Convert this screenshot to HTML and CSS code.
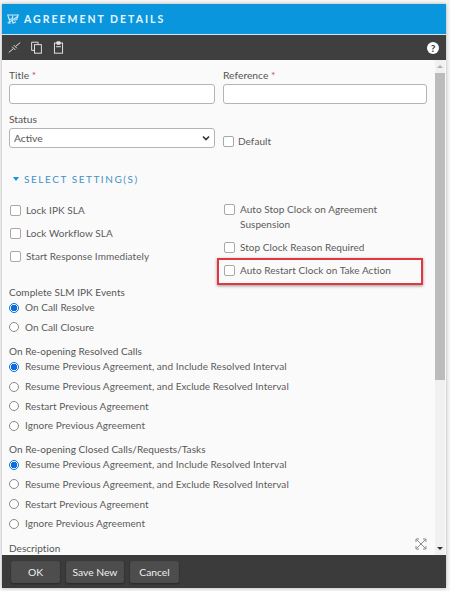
FILE: index.html
```html
<!DOCTYPE html>
<html lang="en">
<head>
    <meta charset="UTF-8">
    <title>Agreement Details</title>
    <link rel="stylesheet" href="styles.css">
</head>
<body>
    <div class="dialog">
        <div class="header">
            <svg class="header-icon" viewBox="0 0 16 16" width="12" height="13" fill="none" stroke="#cfe9f8" stroke-width="1.5">
                <path d="M1 2h7l-1 5-4 1z"/>
                <path d="M9 2h6l-2 6-4 1"/>
                <path d="M1 13 14 4"/>
                <path d="M3 9l1 5M7 9l1 4 4-2"/>
            </svg>
            <span class="header-title">AGREEMENT DETAILS</span>
        </div>
        <div class="toolbar">
            <svg viewBox="0 0 16 16" width="13" height="13" fill="none" stroke="#e4e4e4" stroke-width="1.2">
                <path d="M1 14 6.5 9.5M9.5 6.5 15 2"/>
                <path d="M5 7l4 4M7 5l4 4"/>
            </svg>
            <svg viewBox="0 0 16 16" width="13" height="13" fill="none" stroke="#e4e4e4" stroke-width="1.2">
                <path d="M10 4V1.5H2v10h3"/>
                <rect x="5.5" y="4.5" width="8.5" height="10.5"/>
            </svg>
            <svg viewBox="0 0 16 16" width="13" height="13" fill="none" stroke="#e4e4e4" stroke-width="1.2">
                <rect x="3" y="2.5" width="10" height="12.5"/>
                <path d="M6 1h4v3H6z" fill="#e4e4e4"/>
                <path d="M5 7h6"/>
            </svg>
            <span class="help">?</span>
        </div>
        <div class="main">
            <div class="content">
                <div class="form-row">
                    <div class="field">
                        <label class="label">Title <span class="req">*</span></label>
                        <input class="input" type="text">
                    </div>
                    <div class="field">
                        <label class="label">Reference <span class="req">*</span></label>
                        <input class="input" type="text">
                    </div>
                </div>
                <div class="form-row status-row">
                    <div class="field">
                        <label class="label">Status</label>
                        <select class="input select"><option>Active</option></select>
                    </div>
                    <div class="field default-field">
                        <label class="check"><input type="checkbox">Default</label>
                    </div>
                </div>

                <div class="section-title"><span class="caret"></span>SELECT SETTING(S)</div>

                <div class="settings">
                    <div class="settings-col settings-left">
                        <label class="check"><input type="checkbox">Lock IPK SLA</label>
                        <label class="check"><input type="checkbox">Lock Workflow SLA</label>
                        <label class="check"><input type="checkbox">Start Response Immediately</label>
                    </div>
                    <div class="settings-col settings-right">
                        <label class="check wrap"><input type="checkbox"><span>Auto Stop Clock on Agreement Suspension</span></label>
                        <label class="check"><input type="checkbox">Stop Clock Reason Required</label>
                        <label class="check marked"><input type="checkbox">Auto Restart Clock on Take Action<span class="highlight"></span></label>
                    </div>
                </div>

                <div class="group first">
                    <div class="group-label">Complete SLM IPK Events</div>
                    <label class="radio"><input type="radio" name="g1" checked>On Call Resolve</label>
                    <label class="radio"><input type="radio" name="g1">On Call Closure</label>
                </div>
                <div class="group">
                    <div class="group-label">On Re-opening Resolved Calls</div>
                    <label class="radio"><input type="radio" name="g2" checked>Resume Previous Agreement, and Include Resolved Interval</label>
                    <label class="radio"><input type="radio" name="g2">Resume Previous Agreement, and Exclude Resolved Interval</label>
                    <label class="radio"><input type="radio" name="g2">Restart Previous Agreement</label>
                    <label class="radio"><input type="radio" name="g2">Ignore Previous Agreement</label>
                </div>
                <div class="group">
                    <div class="group-label">On Re-opening Closed Calls/Requests/Tasks</div>
                    <label class="radio"><input type="radio" name="g3" checked>Resume Previous Agreement, and Include Resolved Interval</label>
                    <label class="radio"><input type="radio" name="g3">Resume Previous Agreement, and Exclude Resolved Interval</label>
                    <label class="radio"><input type="radio" name="g3">Restart Previous Agreement</label>
                    <label class="radio"><input type="radio" name="g3">Ignore Previous Agreement</label>
                </div>
                <div class="group description">
                    <div class="group-label">Description</div>
                    <svg class="expand" viewBox="0 0 12 12" width="12" height="12" fill="none" stroke="#8a8a8a" stroke-width="1">
                        <path d="M1 4V1h3M8 1h3v3M11 8v3H8M4 11H1V8"/>
                        <path d="M1.5 1.5l9 9M10.5 1.5l-9 9"/>
                    </svg>
                </div>
            </div>
            <div class="scrollbar">
                <span class="arrow up"></span>
                <div class="track"><div class="thumb"></div></div>
                <span class="arrow down"></span>
            </div>
        </div>
        <div class="footer">
            <button class="btn btn-ok">OK</button>
            <button class="btn btn-save">Save New</button>
            <button class="btn btn-cancel">Cancel</button>
        </div>
    </div>
</body>
</html>
```

FILE: styles.css
```css
* {
    margin: 0;
    padding: 0;
    box-sizing: border-box;
    font-family: 'Lato', 'Liberation Sans', sans-serif;
}

body {
    background-color: #f4f4f4;
    height: 591px;
    overflow: hidden;
    padding: 4px 4px 3px 2px;
}

.dialog {
    display: flex;
    flex-direction: column;
    height: 584px;
    background-color: #fafafa;
    box-shadow: 0 0 3px rgba(0, 0, 0, 0.3);
}

.header {
    display: flex;
    align-items: center;
    gap: 5px;
    height: 31px;
    padding-left: 5px;
    flex: none;
    background-color: #0a96dc;
    border-bottom: 1px solid #cfe6f3;
}

.header-title {
    color: #e8f5fc;
    font-size: 10.5px;
    font-weight: 700;
    letter-spacing: 2px;
}

.toolbar {
    display: flex;
    align-items: center;
    gap: 9px;
    height: 25px;
    padding: 0 7px 0 6px;
    flex: none;
    background-color: #3f3f3f;
}

.help {
    margin-left: auto;
    width: 12px;
    height: 12px;
    border-radius: 50%;
    background-color: #fff;
    color: #3f3f3f;
    font-size: 10px;
    font-weight: 900;
    line-height: 12px;
    text-align: center;
}

.main {
    display: flex;
    flex: 1;
    min-height: 0;
}

.content {
    flex: 1;
    min-width: 0;
    overflow: hidden;
    padding: 9px 8px 0 7px;
    color: #555;
    font-size: 10px;
}

.form-row {
    display: grid;
    grid-template-columns: 206px 204px;
    gap: 8px;
}

.status-row {
    margin-top: 9px;
}

.field {
    min-width: 0;
}

.label {
    display: block;
    height: 15px;
    line-height: 13px;
    color: #555;
    font-size: 10.3px;
}

.req {
    color: #e0405a;
}

.input {
    display: block;
    width: 100%;
    height: 20px;
    border: 1px solid #b4b4b4;
    border-radius: 3px;
    background-color: #fff;
    color: #555;
    font-size: 10.3px;
    padding-left: 4px;
}

.select {
    appearance: none;
    background-image: url("data:image/svg+xml,%3Csvg xmlns='http://www.w3.org/2000/svg' width='8' height='6'%3E%3Cpath d='M1 1.5l3 3 3-3' fill='none' stroke='%23333' stroke-width='1.6'/%3E%3C/svg%3E");
    background-repeat: no-repeat;
    background-position: right 4px center;
}

.default-field {
    display: flex;
    align-items: flex-end;
}

.default-field .check {
    margin-bottom: -1px;
}

.check,
.radio {
    display: flex;
    align-items: center;
    color: #5a5a5a;
    font-size: 10px;
    letter-spacing: 0.05px;
    line-height: 15px;
}

.default-field .check input {
    margin-right: 4px;
}

.check input {
    appearance: none;
    flex: none;
    width: 11px;
    height: 11px;
    margin-right: 5px;
    border: 1px solid #a8a8a8;
    border-radius: 2px;
    background-color: #fff;
}

.radio {
    height: 19.6px;
}

.radio input {
    appearance: none;
    flex: none;
    width: 10px;
    height: 10px;
    margin-right: 6px;
    border: 1px solid #8a8a8a;
    border-radius: 50%;
    background-color: #fff;
}

.radio input:checked {
    border-color: #0a6fdc;
    background: radial-gradient(circle, #0a6fdc 0 3px, #fff 3.5px);
}

.section-title {
    display: flex;
    align-items: center;
    margin-top: 25px;
    padding-left: 4px;
    color: #3e93c4;
    font-size: 10px;
    letter-spacing: 1.55px;
}

.caret {
    width: 0;
    height: 0;
    margin-right: 5px;
    border-left: 3px solid transparent;
    border-right: 3px solid transparent;
    border-top: 4px solid #0a96dc;
}

.settings {
    display: grid;
    grid-template-columns: 206px 204px;
    gap: 8px;
    margin-top: 17px;
}

.settings-col {
    display: flex;
    flex-direction: column;
    gap: 8px;
}

.settings-left {
    padding: 1px 0 0 1px;
}

.settings-right {
    padding-left: 1px;
}

.wrap {
    align-items: flex-start;
}

.wrap input {
    margin-top: 2px;
}

.marked {
    position: relative;
}

.highlight {
    position: absolute;
    top: -5px;
    bottom: -7px;
    left: -7px;
    right: 4px;
    border: 2px solid #e0383e;
    box-shadow: 0 1px 3px rgba(0, 0, 0, 0.4);
}

.group {
    display: flex;
    flex-direction: column;
    margin-top: 9px;
}

.group-label {
    line-height: 11px;
    letter-spacing: 0.05px;
}

.group + .group + .group {
    margin-top: 8.5px;
}

.group + .group + .group + .group {
    margin-top: 9.5px;
}

.description {
    position: relative;
}

.expand {
    position: absolute;
    top: -5px;
    right: 0;
}

.scrollbar {
    flex: none;
    display: flex;
    flex-direction: column;
    align-items: center;
    width: 10px;
    margin-right: 1px;
    background-color: #f1f1f1;
}

.arrow {
    flex: none;
    width: 0;
    height: 0;
    margin: 5px 0;
    border-left: 3px solid transparent;
    border-right: 3px solid transparent;
}

.arrow.up {
    border-bottom: 3px solid #b0b0b0;
}

.arrow.down {
    border-top: 3px solid #333;
}

.track {
    flex: 1;
    width: 100%;
}

.thumb {
    height: 307px;
    background-color: #bcbcbc;
}

.footer {
    display: flex;
    align-items: center;
    gap: 6px;
    height: 33px;
    flex: none;
    padding-left: 9px;
    background-color: #3b3b3b;
}

.btn {
    height: 22px;
    border: 1px solid #4a4a4a;
    border-radius: 2px;
    background-color: #4d4d4d;
    color: #f0f0f0;
    font-size: 10.3px;
    box-shadow: 0 1px 2px rgba(0, 0, 0, 0.35);
}

.btn-ok {
    width: 49px;
}

.btn-save {
    width: 58px;
}

.btn-cancel {
    width: 49px;
}
```
